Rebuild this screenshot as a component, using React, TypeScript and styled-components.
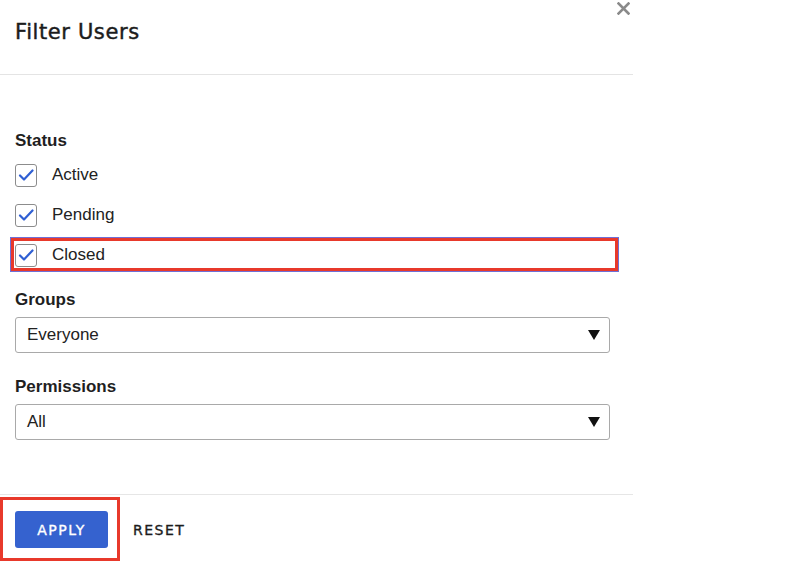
import React from "react";
import styled, { createGlobalStyle } from "styled-components";

const Global = createGlobalStyle`
  html, body { margin: 0; padding: 0; background: #fff; }
  body { font-family: "Liberation Sans", Arial, sans-serif; color: #1f1f1f; }
  * { box-sizing: border-box; }
`;

const Panel = styled.div`
  width: 633px;
  height: 563px;
  display: flex;
  flex-direction: column;
  position: relative;
  background: #fff;
`;

const Header = styled.header`
  height: 75px;
  border-bottom: 1px solid #e4e4e4;
  display: flex;
  align-items: flex-start;
  padding: 18px 15px 0;
`;

const Title = styled.h1`
  margin: 0;
  font-family: "DejaVu Sans", Verdana, sans-serif;
  font-size: 21px;
  font-weight: 400;
  letter-spacing: 0.6px;
  line-height: 28px;
  color: #1c1c1c;
  -webkit-text-stroke: 0.45px #1c1c1c;
`;

const Close = styled.button`
  position: absolute;
  top: 0;
  right: 0;
  width: 20px;
  height: 16px;
  padding: 0;
  border: none;
  background: transparent;
  display: flex;
  align-items: center;
  justify-content: center;
  cursor: pointer;
`;

const Body = styled.div`
  flex: 1;
  padding: 56px 23px 0 15px;
  display: flex;
  flex-direction: column;
`;

const SectionLabel = styled.div<{ $top: number }>`
  font-size: 17px;
  font-weight: 700;
  line-height: 20px;
  color: #1f1f1f;
  margin-top: ${(p) => p.$top}px;
`;

const Options = styled.div`
  margin-top: 4px;
  display: flex;
  flex-direction: column;
`;

const OptionRow = styled.label<{ $highlight?: boolean }>`
  height: 40px;
  display: flex;
  align-items: center;
  gap: 15px;
  position: relative;
  font-size: 17px;
  color: #222;
  ${(p) =>
    p.$highlight
      ? `
  &::after {
    content: "";
    position: absolute;
    left: -4px;
    right: -8px;
    top: 3px;
    bottom: 4px;
    border: 3px solid #e8392b;
    box-shadow: 0 0 0 1px #6f6fd6;
    pointer-events: none;
  }`
      : ""}
`;

const Box = styled.span`
  width: 22px;
  height: 23px;
  border: 1px solid #8c8c8c;
  border-radius: 3px;
  display: flex;
  align-items: center;
  justify-content: center;
  flex: none;
  background: #fff;
`;

const Select = styled.div`
  margin-top: 7px;
  height: 36px;
  border: 1px solid #a9a9a9;
  border-radius: 3px;
  display: flex;
  align-items: center;
  justify-content: space-between;
  padding: 0 9px 0 11px;
  font-size: 17px;
  color: #222;
`;

const Arrow = styled.span`
  width: 0;
  height: 0;
  border-left: 6px solid transparent;
  border-right: 6px solid transparent;
  border-top: 10px solid #111;
`;

const Footer = styled.footer`
  border-top: 1px solid #e6e6e6;
  height: 69px;
  display: flex;
  align-items: flex-start;
  padding: 16px 0 0 15px;
  gap: 25px;
`;

const ButtonWrap = styled.div<{ $highlight?: boolean }>`
  position: relative;
  ${(p) =>
    p.$highlight
      ? `
  &::after {
    content: "";
    position: absolute;
    left: -15px;
    right: -12px;
    top: -14px;
    bottom: -13px;
    border: 3px solid #e8392b;
    pointer-events: none;
  }`
      : ""}
`;

const Button = styled.button<{ $primary?: boolean }>`
  height: 37px;
  width: ${(p) => (p.$primary ? "93px" : "auto")};
  padding: 0;
  border: none;
  border-radius: 3px;
  background: ${(p) => (p.$primary ? "#3562cf" : "transparent")};
  color: ${(p) => (p.$primary ? "#fff" : "#1c1c1c")};
  font-family: "DejaVu Sans", Verdana, sans-serif;
  font-size: 14px;
  font-weight: 500;
  letter-spacing: 1.5px;
  -webkit-text-stroke: 0.35px ${(p) => (p.$primary ? "#fff" : "#1c1c1c")};
  cursor: pointer;
`;

const Check = () => (
  <svg width="16" height="14" viewBox="0 0 16 14">
    <path d="M2 7.5 L6 11.5 L14.5 2.5" fill="none" stroke="#2f5fd3" strokeWidth="2.2" strokeLinecap="round" strokeLinejoin="round" />
  </svg>
);

const statuses = ["Active", "Pending", "Closed"];

export default function App() {
  return (
    <>
      <Global />
      <Panel>
        <Header>
          <Title>Filter Users</Title>
        </Header>
        <Close aria-label="Close">
          <svg width="13" height="13" viewBox="0 0 13 13">
            <path d="M1.5 1.5 L11.5 11.5 M11.5 1.5 L1.5 11.5" stroke="#8a8a8a" strokeWidth="2.6" strokeLinecap="square" />
          </svg>
        </Close>
        <Body>
          <SectionLabel $top={0}>Status</SectionLabel>
          <Options>
            {statuses.map((s) => (
              <OptionRow key={s} $highlight={s === "Closed"}>
                <Box>
                  <Check />
                </Box>
                {s}
              </OptionRow>
            ))}
          </Options>
          <SectionLabel $top={15}>Groups</SectionLabel>
          <Select>
            Everyone
            <Arrow />
          </Select>
          <SectionLabel $top={24}>Permissions</SectionLabel>
          <Select>
            All
            <Arrow />
          </Select>
        </Body>
        <Footer>
          <ButtonWrap $highlight>
            <Button $primary>APPLY</Button>
          </ButtonWrap>
          <ButtonWrap>
            <Button>RESET</Button>
          </ButtonWrap>
        </Footer>
      </Panel>
    </>
  );
}
